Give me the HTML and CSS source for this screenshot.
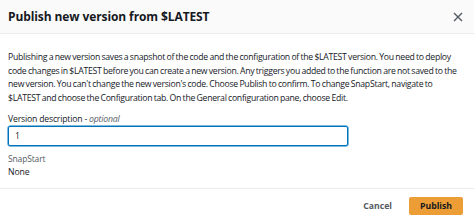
FILE: index.html
```html
<!DOCTYPE html>
<html>
<head>
<meta charset="utf-8">
<link rel="stylesheet" href="styles.css">
</head>
<body>
<div class="modal">
  <div class="header">
    <h2 class="title">Publish new version from $LATEST</h2>
    <button class="close" aria-label="Close">
      <svg width="10" height="10" viewBox="0 0 10 10"><path d="M1 1L9 9M9 1L1 9" stroke="#545b64" stroke-width="1.4" fill="none"/></svg>
    </button>
  </div>
  <div class="content">
    <p class="desc">Publishing a new version saves a snapshot of the code and the configuration of the $LATEST version. You need to deploy code changes in $LATEST before you can create a new version. Any triggers you added to the function are not saved to the new version. You can't change the new version's code. Choose Publish to confirm. To change SnapStart, navigate to $LATEST and choose the Configuration tab. On the General configuration pane, choose Edit.</p>
    <label class="label">Version description - <i>optional</i></label>
    <div class="input">1</div>
    <div class="kv-key">SnapStart</div>
    <div class="kv-val">None</div>
  </div>
  <div class="footer">
    <button class="btn-link">Cancel</button>
    <button class="btn-primary">Publish</button>
  </div>
</div>
</body>
</html>
```
FILE: styles.css
```css
html, body {
  margin: 0;
  padding: 0;
  background: #ffffff;
}
body {
  font-family: "Open Sans", "Noto Sans", sans-serif;
  color: #16191f;
  width: 474px;
  height: 221px;
  overflow: hidden;
}
.modal {
  display: flex;
  flex-direction: column;
  height: 221px;
}
.header {
  height: 34px;
  box-sizing: border-box;
  background: #fafafa;
  border-bottom: 1px solid #eaeded;
  display: flex;
  align-items: center;
  justify-content: space-between;
  padding: 0 11px 0 8px;
}
.title {
  margin: 0;
  font-size: 12px;
  font-weight: 700;
  letter-spacing: -0.1px;
}
.close {
  border: 0;
  background: none;
  padding: 0;
  display: flex;
}
.content {
  padding: 17px 8px 9px 8px;
  flex: 1;
  border-bottom: 1px solid #eaeded;
}
.desc {
  margin: 0 0 7px 0;
  font-size: 8.7px;
  letter-spacing: -0.28px;
  word-spacing: -0.5px;
  line-height: 13.5px;
}
.label {
  display: block;
  font-size: 8.7px;
  letter-spacing: -0.2px;
  line-height: 14px;
}
.label i {
  color: #545b64;
}
.input {
  width: 340px;
  height: 20px;
  box-sizing: border-box;
  border: 1px solid #0073bb;
  border-radius: 2px;
  box-shadow: 0 0 0 0.5px #0073bb;
  font-size: 8.7px;
  line-height: 18px;
  padding-left: 6px;
  margin-bottom: 6px;
}
.kv-key {
  font-size: 8.5px;
  letter-spacing: -0.15px;
  line-height: 13px;
  color: #545b64;
}
.kv-val {
  font-size: 8.7px;
  letter-spacing: -0.15px;
  line-height: 14px;
}
.footer {
  flex: 1;
  display: flex;
  align-items: center;
  justify-content: flex-end;
  padding: 2px 11px 0 0;
  gap: 17px;
}
.btn-link {
  border: 0;
  background: none;
  font-family: inherit;
  font-size: 8.7px;
  font-weight: 700;
  color: #545b64;
  padding: 0;
}
.btn-primary {
  border: 0;
  background: #ec9d35;
  color: #16191f;
  font-family: inherit;
  font-size: 8.7px;
  font-weight: 700;
  width: 54px;
  height: 18px;
  border-radius: 2px;
  padding: 0;
}
```
